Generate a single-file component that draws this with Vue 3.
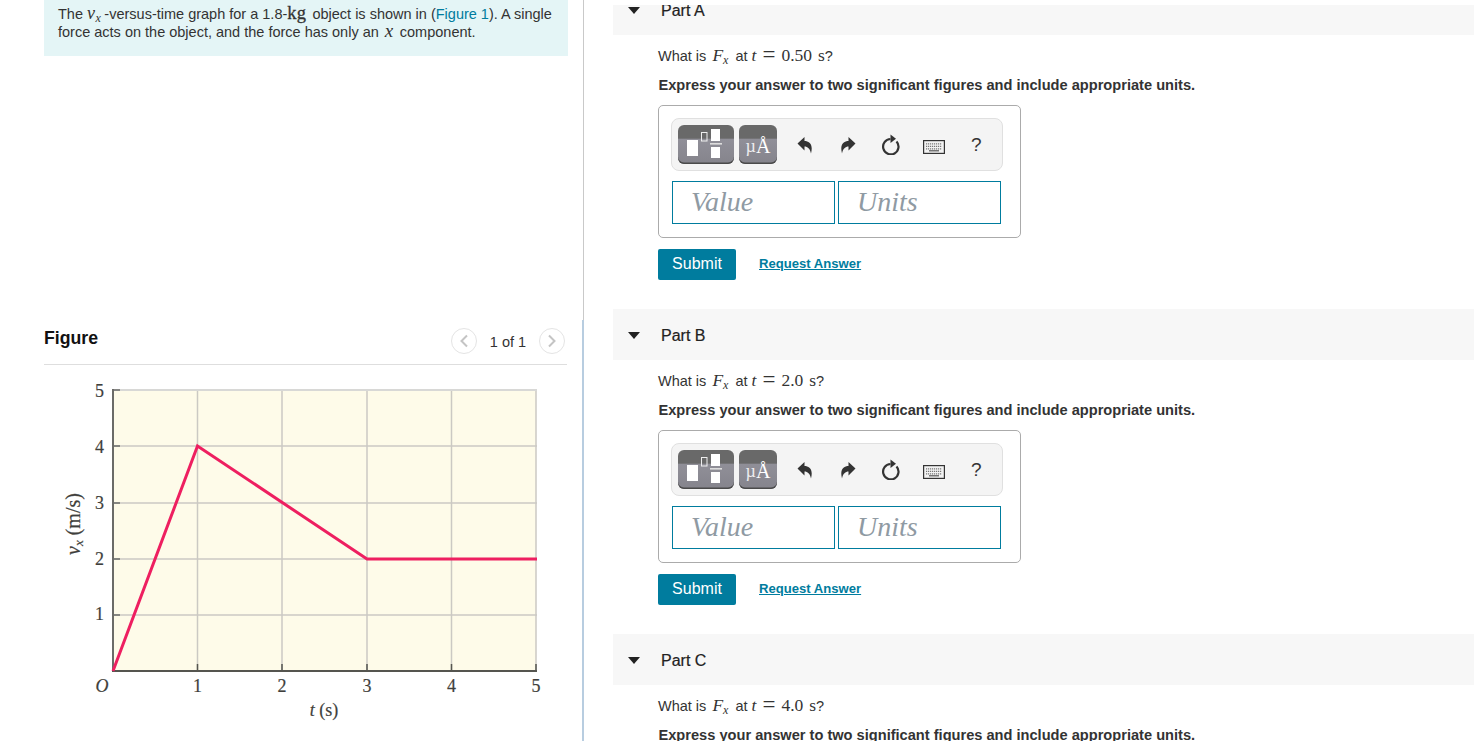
<script setup>
const parts = [
  { id: 'A', time: '0.50' },
  { id: 'B', time: '2.0' },
  { id: 'C', time: '4.0' }
]

// graph scale
const xs = [113, 197.5, 282, 367, 451.5, 536]
const ys = [671, 615, 559, 503, 446, 390]
</script>

<template>
  <div class="page">
    <div class="left">
      <section class="left-top">
        <div class="intro">
          The <span class="math var vx"><i>v</i><i class="sub">x</i></span>-versus-time graph for a 1.8-<span class="math kg">kg</span> object is shown in (<a class="link">Figure 1</a>). A single
          force acts on the object, and the force has only an <span class="math var"><i class="wide">x</i></span> component.
        </div>
      </section>
      <section class="left-bottom">
        <div class="fig-head">
          <h2 class="fig-title">Figure</h2>
          <div class="pager">
            <span class="pager-btn">
              <svg width="10" height="14" viewBox="0 0 10 14"><path d="M8 1.5 2.5 7 8 12.5" fill="none" stroke="#c4c4c4" stroke-width="2" /></svg>
            </span>
            <span class="pager-text">1 of 1</span>
            <span class="pager-btn">
              <svg width="10" height="14" viewBox="0 0 10 14"><path d="M2 1.5 7.5 7 2 12.5" fill="none" stroke="#c4c4c4" stroke-width="2" /></svg>
            </span>
          </div>
        </div>
        <!-- viewBox uses page coordinates so the numbers read like the picture -->
        <svg class="graph" width="538" height="376" viewBox="44 365 538 376">
          <rect x="113" y="390" width="423" height="281" fill="#fefbe9" />
          <line v-for="x in xs.slice(1)" :key="'v' + x" :x1="x" :x2="x" y1="390" y2="671" stroke="#cbc9c3" stroke-width="1.5" />
          <line v-for="y in ys.slice(1)" :key="'h' + y" x1="113" x2="537" :y1="y" :y2="y" stroke="#cbc9c3" stroke-width="1.5" />
          <line x1="113" x2="537" y1="390" y2="390" stroke="#d8d8d6" stroke-width="2" />
          <line x1="113" x2="113" y1="389" y2="672" stroke="#6b6b68" stroke-width="2" />
          <line x1="112" x2="537" y1="671" y2="671" stroke="#55554f" stroke-width="1.8" />
          <line v-for="y in ys.slice(1)" :key="'t' + y" x1="113" x2="120" :y1="y" :y2="y" stroke="#6b6b68" stroke-width="1.5" />
          <line v-for="x in xs.slice(1)" :key="'u' + x" :x1="x" :x2="x" y1="664" y2="671" stroke="#55554f" stroke-width="1.5" />
          <polyline points="113,671 197.5,446 367,559 537,559" fill="none" stroke="#ee1f60" stroke-width="3" stroke-linejoin="miter" />
          <g class="tick">
            <text x="99.500" y="397" text-anchor="middle">5</text>
            <text x="99.500" y="453" text-anchor="middle">4</text>
            <text x="99.500" y="509" text-anchor="middle">3</text>
            <text x="99.500" y="565" text-anchor="middle">2</text>
            <text x="99.500" y="620" text-anchor="middle">1</text>
            <text x="102" y="692" text-anchor="middle" font-style="italic">O</text>
            <text x="197.5" y="692" text-anchor="middle">1</text>
            <text x="282" y="692" text-anchor="middle">2</text>
            <text x="367" y="692" text-anchor="middle">3</text>
            <text x="451.5" y="692" text-anchor="middle">4</text>
            <text x="536" y="692" text-anchor="middle">5</text>
            <text x="324" y="716" text-anchor="middle"><tspan font-style="italic">t</tspan> (s)</text>
            <text transform="translate(80 555) rotate(-90)" font-size="20"><tspan font-style="italic">v</tspan><tspan font-style="italic" font-size="13" dy="3">x</tspan><tspan dy="-3"> (m/s)</tspan></text>
          </g>
        </svg>
      </section>
    </div>

    <div class="right">
      <div class="right-inner">
        <section v-for="part in parts" :key="part.id" class="part">
          <header class="part-head">
            <span class="caret"></span>
            <h3 class="part-title">Part {{ part.id }}</h3>
          </header>
          <div class="part-body">
            <p class="question">
              What is <span class="math eq f"><i>F</i><i class="sub">x</i></span> at
              <span class="math eq"><i>t</i><span class="op">=</span>{{ part.time }}<span class="unit">s</span></span>?
            </p>
            <p class="hint">Express your answer to two significant figures and include appropriate units.</p>
            <div class="answer">
              <div class="toolbar">
                <span class="tool tool-wide">
                  <svg width="56" height="39" viewBox="0 0 56 39">
                    <rect x="9" y="15" width="11" height="16" fill="#fff" />
                    <rect x="23.500" y="7.500" width="5.500" height="8.500" fill="none" stroke="#eee" stroke-width="1" />
                    <rect x="33" y="4" width="9" height="12" fill="#fff" />
                    <rect x="32" y="18" width="12" height="1.600" fill="#ddd" />
                    <rect x="33" y="22" width="9" height="11" fill="#fff" />
                  </svg>
                </span>
                <span class="tool tool-unit"><span class="mu">µ</span><span class="ang">Å</span></span>
                <svg class="ico undo" width="16" height="18" viewBox="0 0 16 18"><path d="M.5 7.500 7.500 1V5C12 5 16.500 8 14 17.500 13 12.500 10.500 10.500 7.500 10.500V14.500z" fill="#333" /></svg>
                <svg class="ico redo" width="16" height="18" viewBox="0 0 16 18"><path d="M15.500 7.500 8.500 1V5C4 5-.5 8 2 17.500 3 12.500 5.500 10.500 8.500 10.500V14.500z" fill="#333" /></svg>
                <svg class="ico reset" width="18" height="21" viewBox="0 0 18 21"><path d="M14.500 7.500A7.700 7.700 0 1 1 8.500 5" fill="none" stroke="#333" stroke-width="2.200" /><path d="M8.500 .5 14 4.800 8.500 9z" fill="#333" /></svg>
                <svg class="ico keys" width="22" height="14" viewBox="0 0 22 14">
                  <rect x=".6" y=".6" width="20.800" height="12.800" fill="#f2f2f2" stroke="#333" stroke-width="1.200" />
                  <path d="M3 3.800h16M3 6.300h16M3 8.800h16" stroke="#777" stroke-width="1.200" stroke-dasharray="1.200 .8" />
                  <path d="M6 10.800h10" stroke="#555" stroke-width="1.200" />
                </svg>
                <span class="help">?</span>
              </div>
              <div class="fields">
                <input class="field" placeholder="Value" />
                <input class="field" placeholder="Units" />
              </div>
            </div>
            <div class="actions">
              <button class="submit">Submit</button>
              <a class="request">Request Answer</a>
            </div>
          </div>
        </section>
      </div>
    </div>
  </div>
</template>

<style>
html, body {
  margin: 0;
  overflow: hidden;
  background: #fff;
}
</style>

<style scoped>
.page {
  display: flex;
  height: 741px;
  overflow: hidden;
  font-family: "Liberation Sans", Arial, sans-serif;
  color: #333;
  background: #fff;
}

.left {
  flex: none;
  width: 584px;
  display: flex;
  flex-direction: column;
}
.left-top {
  height: 320px;
  box-sizing: border-box;
  padding-left: 44px;
  border-right: 1px solid #c9c9c9;
}
.intro {
  width: 524px;
  height: 56px;
  box-sizing: border-box;
  padding: 5px 10px 0 14px;
  background: #e4f5f6;
  font-size: 14.500px;
  line-height: 18px;
}
.link {
  color: #007c9e;
}
.math {
  font-family: "Liberation Serif", "Times New Roman", serif;
}
.var {
  font-size: 18px;
  line-height: 0;
}
.var i {
  letter-spacing: 0.5px;
}
.vx {
  margin-right: 3px;
}
.var .wide {
  font-size: 19px;
  padding: 0 2px;
}
.sub {
  font-size: 12px;
  position: relative;
  top: 3px;
  line-height: 0;
}
.kg {
  font-size: 18.500px;
  line-height: 0;
  letter-spacing: 0.3px;
  margin-right: 2px;
  -webkit-text-stroke: 0.3px #333;
}

.left-bottom {
  flex: 1;
  min-height: 0;
  padding-left: 44px;
  border-right: 2px solid #b8cde0;
}
.fig-head {
  width: 523px;
  height: 44px;
  display: flex;
  align-items: center;
  justify-content: space-between;
  border-bottom: 1px solid #dedede;
}
.fig-title {
  margin: 0 0 8px;
  font-size: 17.700px;
  font-weight: 700;
  color: #111;
}
.pager {
  display: flex;
  align-items: center;
  margin: 0 2px 3px 0;
}
.pager-btn {
  width: 26px;
  height: 26px;
  box-sizing: border-box;
  border: 1px solid #e4e4e4;
  border-radius: 50%;
  display: flex;
  align-items: center;
  justify-content: center;
}
.pager-text {
  width: 62px;
  padding-top: 2px;
  text-align: center;
  font-size: 14.500px;
}
.graph {
  display: block;
}
.tick {
  font-family: "Liberation Serif", "Times New Roman", serif;
  font-size: 18px;
  fill: #3f3f3c;
  stroke: #3f3f3c;
  stroke-width: 0.2px;
}

.right {
  flex: 1;
  min-width: 0;
  padding: 5px 0 0 29px;
  overflow: hidden;
}
.right-inner {
  height: 736px;
  overflow: hidden;
}
.part {
  height: 325px;
  position: relative;
  top: -21px;
}
.part-head {
  display: flex;
  align-items: center;
  height: 51px;
  box-sizing: border-box;
  padding-top: 2px;
  background: #f7f7f7;
}
.caret {
  margin-left: 15px;
  width: 0;
  height: 0;
  border-left: 6px solid transparent;
  border-right: 6px solid transparent;
  border-top: 7px solid #222;
}
.part-title {
  margin: 0 0 0 21px;
  font-size: 16px;
  font-weight: 400;
  color: #222;
  -webkit-text-stroke: 0.2px #222;
}
.part-body {
  padding-left: 45px;
}
.question {
  margin: 11px 0 0;
  font-size: 14.500px;
  line-height: 20px;
}
.eq {
  font-size: 17.500px;
  line-height: 0;
}
.f {
  margin: 0 3px 0 2px;
}
.op {
  font-size: 23px;
  margin: 0 6px;
  position: relative;
  top: 1px;
}
.unit {
  margin-left: 6px;
}
.hint {
  margin: 9px 0 0 0.5px;
  font-size: 14.620px;
  line-height: 20px;
  font-weight: 700;
}
.answer {
  width: 363px;
  height: 133px;
  box-sizing: border-box;
  margin-top: 10px;
  padding: 12px 17px 0 12px;
  border: 1px solid #ababab;
  border-radius: 5px;
}
.toolbar {
  height: 53px;
  box-sizing: border-box;
  display: flex;
  align-items: center;
  padding: 0 0 0 6px;
  background: #f4f4f4;
  border: 1px solid #e0e0e0;
  border-radius: 8px;
}
.tool {
  height: 39px;
  box-sizing: border-box;
  border-radius: 6px;
  background: linear-gradient(#696969 0 34%, #908f98 36%, #85848c 100%);
  box-shadow: inset 0 -1.500px 0 #4a4a4a;
  display: flex;
  color: #fff;
}
.tool-wide {
  width: 56px;
}
.tool-unit {
  width: 38px;
  margin-left: 5px;
  align-items: flex-end;
  justify-content: center;
  padding-bottom: 8px;
  font-family: "Liberation Serif", "Times New Roman", serif;
}
.mu {
  font-size: 18px;
  line-height: 20px;
  opacity: 0.85;
}
.ang {
  font-size: 20px;
  line-height: 20px;
}
.ico {
  flex: none;
}
.undo {
  margin-left: 20px;
}
.redo {
  margin-left: 27px;
}
.reset {
  margin-left: 26px;
}
.keys {
  margin-left: 23px;
  margin-top: 4px;
}
.help {
  margin-left: 26px;
  font-size: 19px;
  color: #333;
}
.fields {
  display: flex;
  gap: 3px;
  margin: 10px 0 0 1px;
}
.field {
  width: 163px;
  height: 43px;
  box-sizing: border-box;
  border: 1px solid #007c9e;
  border-radius: 0;
  padding: 0 0 2px 18px;
  background: #fff;
  outline: none;
  font-family: "Liberation Serif", "Times New Roman", serif;
  font-style: italic;
  font-size: 28px;
}
.field::placeholder {
  color: #8f9aa3;
  opacity: 1;
}
.actions {
  display: flex;
  align-items: center;
  margin-top: 11px;
}
.submit {
  width: 78px;
  height: 31px;
  border: 0;
  border-radius: 2px;
  background: #007c9e;
  color: #fff;
  font-family: "Liberation Sans", Arial, sans-serif;
  font-size: 16px;
  padding: 0 0 2px;
}
.request {
  margin: 0 0 2px 23px;
  font-size: 13.100px;
  font-weight: 700;
  color: #007c9e;
  text-decoration: underline;
}
</style>
